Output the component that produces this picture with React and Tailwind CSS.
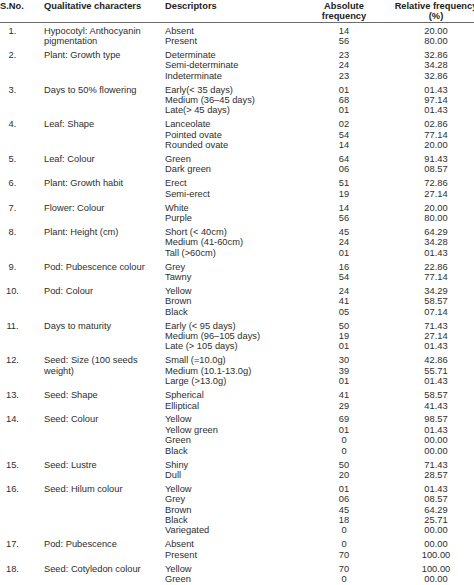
import React from 'react';

const rows = [
  { no: '1.', name: ['Hypocotyl: Anthocyanin', 'pigmentation'], items: [['Absent', '14', '20.00'], ['Present', '56', '80.00']] },
  { no: '2.', name: ['Plant: Growth type'], items: [['Determinate', '23', '32.86'], ['Semi-determinate', '24', '34.28'], ['Indeterminate', '23', '32.86']] },
  { no: '3.', name: ['Days to 50% flowering'], items: [['Early(< 35 days)', '01', '01.43'], ['Medium (36–45 days)', '68', '97.14'], ['Late(> 45 days)', '01', '01.43']] },
  { no: '4.', name: ['Leaf: Shape'], items: [['Lanceolate', '02', '02.86'], ['Pointed ovate', '54', '77.14'], ['Rounded ovate', '14', '20.00']] },
  { no: '5.', name: ['Leaf: Colour'], items: [['Green', '64', '91.43'], ['Dark green', '06', '08.57']] },
  { no: '6.', name: ['Plant: Growth habit'], items: [['Erect', '51', '72.86'], ['Semi-erect', '19', '27.14']] },
  { no: '7.', name: ['Flower: Colour'], items: [['White', '14', '20.00'], ['Purple', '56', '80.00']] },
  { no: '8.', name: ['Plant: Height (cm)'], items: [['Short (< 40cm)', '45', '64.29'], ['Medium (41-60cm)', '24', '34.28'], ['Tall (>60cm)', '01', '01.43']] },
  { no: '9.', name: ['Pod: Pubescence colour'], items: [['Grey', '16', '22.86'], ['Tawny', '54', '77.14']] },
  { no: '10.', name: ['Pod: Colour'], items: [['Yellow', '24', '34.29'], ['Brown', '41', '58.57'], ['Black', '05', '07.14']] },
  { no: '11.', name: ['Days to maturity'], items: [['Early (< 95 days)', '50', '71.43'], ['Medium (96–105 days)', '19', '27.14'], ['Late (> 105 days)', '01', '01.43']] },
  { no: '12.', name: ['Seed: Size (100 seeds', 'weight)'], items: [['Small (=10.0g)', '30', '42.86'], ['Medium (10.1-13.0g)', '39', '55.71'], ['Large (>13.0g)', '01', '01.43']] },
  { no: '13.', name: ['Seed: Shape'], items: [['Spherical', '41', '58.57'], ['Elliptical', '29', '41.43']] },
  { no: '14.', name: ['Seed: Colour'], items: [['Yellow', '69', '98.57'], ['Yellow green', '01', '01.43'], ['Green', '0', '00.00'], ['Black', '0', '00.00']] },
  { no: '15.', name: ['Seed: Lustre'], items: [['Shiny', '50', '71.43'], ['Dull', '20', '28.57']] },
  { no: '16.', name: ['Seed: Hilum colour'], items: [['Yellow', '01', '01.43'], ['Grey', '06', '08.57'], ['Brown', '45', '64.29'], ['Black', '18', '25.71'], ['Variegated', '0', '00.00']] },
  { no: '17.', name: ['Pod: Pubescence'], items: [['Absent', '0', '00.00'], ['Present', '70', '100.00']] },
  { no: '18.', name: ['Seed: Cotyledon colour'], items: [['Yellow', '70', '100.00'], ['Green', '0', '00.00']] },
];

const cols = 'grid grid-cols-[44px_121px_139px_80px_104px]';

const Lines = ({ list, className = '' }) => (
  <div className={className}>
    {list.map((t, i) => (
      <div key={i} className="whitespace-nowrap">{t}</div>
    ))}
  </div>
);

export default function App() {
  return (
    <div className="w-[474px] h-[585px] overflow-hidden bg-white">
      <div
        className="w-[488px] text-[9.3px] leading-[10.4px] text-[#2e2e2e]"
        style={{ fontFamily: '"Liberation Sans", Arial, sans-serif' }}
      >
        <div className={`${cols} h-[23px] pt-[1px] border-b border-[#6b6b6b] font-bold text-[#222]`}>
          <div>S.No.</div>
          <div className="whitespace-nowrap">Qualitative characters</div>
          <div>Descriptors</div>
          <div className="text-center">Absolute<br />frequency</div>
          <div className="text-center whitespace-nowrap">Relative frequency<br />(%)</div>
        </div>

        {rows.map((r) => (
          <div key={r.no} className={`${cols} pt-[2.5px] pb-[1px]`}>
            <div className="w-[25px] text-center">{r.no}</div>
            <Lines list={r.name} />
            <Lines list={r.items.map((it) => it[0])} />
            <Lines list={r.items.map((it) => it[1])} className="text-center" />
            <Lines list={r.items.map((it) => it[2])} className="text-center" />
          </div>
        ))}
      </div>
    </div>
  );
}
